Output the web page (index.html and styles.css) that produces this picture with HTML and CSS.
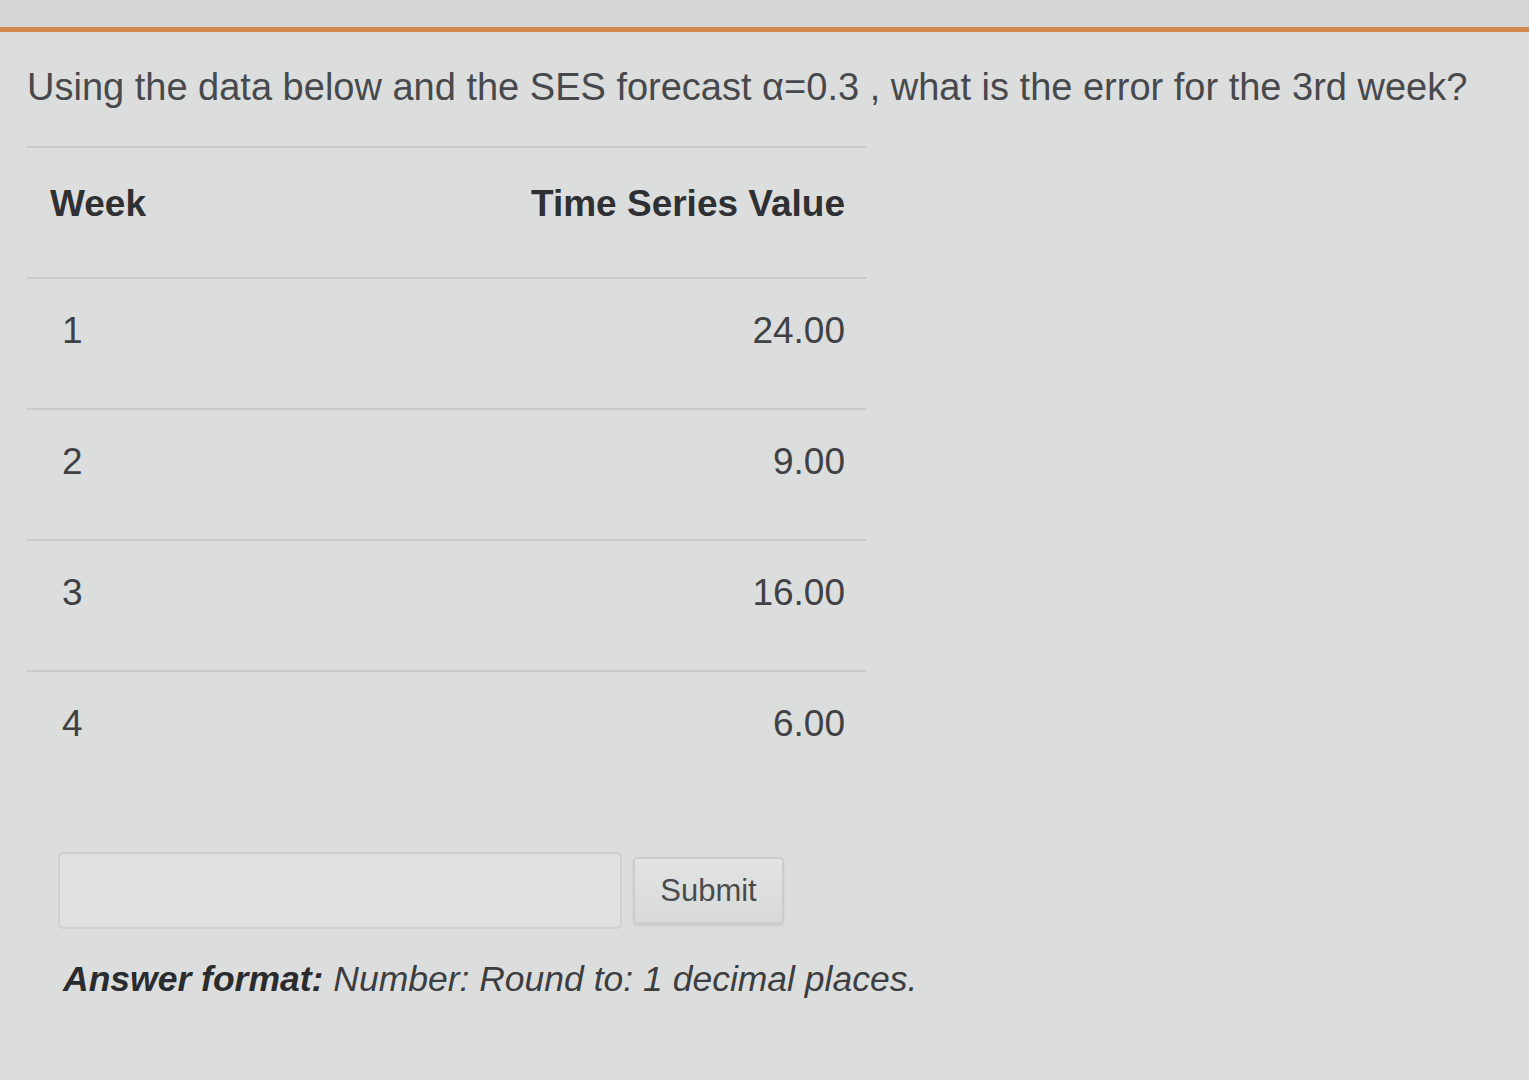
FILE: index.html
```html
<!DOCTYPE html>
<html>
<head>
<meta charset="utf-8">
<link rel="stylesheet" href="styles.css">
</head>
<body>
<div class="topstrip"></div>
<div class="accent"></div>
<main class="content">
  <p class="question">Using the data below and the SES forecast α=0.3 , what is the error for the 3rd week?</p>
  <table class="data">
    <thead>
      <tr><th class="left">Week</th><th class="right">Time Series Value</th></tr>
    </thead>
    <tbody>
      <tr><td class="left">1</td><td class="right">24.00</td></tr>
      <tr><td class="left">2</td><td class="right">9.00</td></tr>
      <tr><td class="left">3</td><td class="right">16.00</td></tr>
      <tr><td class="left">4</td><td class="right">6.00</td></tr>
    </tbody>
  </table>
  <form class="answer">
    <input class="field" type="text">
    <button class="submit" type="button">Submit</button>
  </form>
  <p class="format"><b>Answer format:</b> <i>Number: Round to: 1 decimal places.</i></p>
</main>
</body>
</html>
```

FILE: styles.css
```css
html, body {
  margin: 0;
  padding: 0;
}
body {
  background: #dcdedd;
  font-family: "Liberation Sans", Arial, sans-serif;
  color: #3d3e40;
  width: 1529px;
  height: 1080px;
  overflow: hidden;
}
.topstrip {
  height: 27px;
  background: #d5d6d5;
}
.accent {
  height: 5px;
  background: #d4874a;
}
.content {
  padding: 0 0 0 27px;
}
.question {
  margin: 33px 0 0 0;
  font-size: 38px;
  line-height: 44px;
  color: #48494c;
}
.data {
  margin-top: 37px;
  width: 839px;
  border-collapse: collapse;
  font-size: 37px;
}
.data th, .data td {
  box-sizing: border-box;
  height: 131px;
  padding: 0 21px 26px 35px;
  border-top: 2px solid #c9cbca;
}
.data th {
  font-weight: bold;
  color: #2f3034;
  padding-left: 23px;
  padding-bottom: 18px;
}
.data td {
  color: #404144;
}
.left { text-align: left; }
.right { text-align: right; }
.answer {
  display: flex;
  align-items: center;
  gap: 11px;
  margin: 50px 0 0 31px;
}
.field {
  width: 564px;
  height: 77px;
  box-sizing: border-box;
  border: 2px solid #cfd1d0;
  border-radius: 5px;
  background: #dfe1e0;
}
.submit {
  width: 151px;
  height: 67px;
  border: 2px solid #cbcdcc;
  border-radius: 4px;
  background: linear-gradient(#e2e4e3, #d8dad9);
  font-family: "Liberation Sans", Arial, sans-serif;
  font-size: 31px;
  color: #4a4b4e;
  box-shadow: 0 2px 2px rgba(0,0,0,0.08);
}
.format {
  margin: 30px 0 0 36px;
  font-size: 35.5px;
  color: #333437;
}
.format b {
  font-style: italic;
  color: #2b2c2f;
}
.format i {
  color: #3d3e41;
}
```
